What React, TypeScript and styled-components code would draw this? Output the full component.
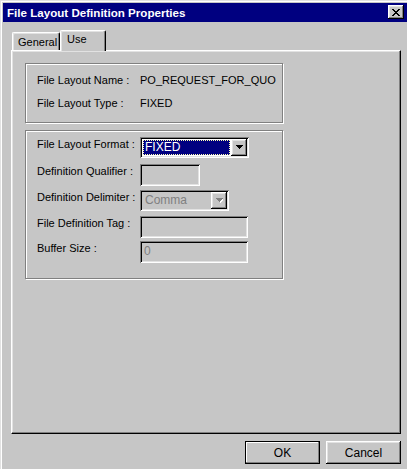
import React from "react";
import styled, { createGlobalStyle, css } from "styled-components";

const GRAY = "#c6c6c6";
const LIGHT = "#e2e2e2";
const DARK = "#808080";
const NAVY = "#000080";

const GlobalStyle = createGlobalStyle`
  html, body {
    margin: 0;
    padding: 0;
    background: ${GRAY};
    overflow: hidden;
  }
  body {
    font-family: "Liberation Sans", Arial, sans-serif;
    font-size: 11px;
    color: #000;
  }
`;

const raised = css`
  box-shadow: inset -1px -1px 0 #000, inset 1px 1px 0 #fff,
    inset -2px -2px 0 ${DARK}, inset 2px 2px 0 ${LIGHT};
`;

const sunken = css`
  box-shadow: inset 1px 1px 0 ${DARK}, inset -1px -1px 0 #fff,
    inset 2px 2px 0 #000, inset -2px -2px 0 ${LIGHT};
`;

const Window = styled.div`
  box-sizing: border-box;
  width: 407px;
  height: 469px;
  background: ${GRAY};
  border-top: 1px solid ${LIGHT};
  border-left: 1px solid ${LIGHT};
  box-shadow: inset 1px 1px 0 #fff;
  padding: 2px 0 0 2px;
  display: flex;
  flex-direction: column;
  overflow: hidden;
`;

const TitleBar = styled.div`
  height: 19px;
  background: ${NAVY};
  display: flex;
  align-items: flex-start;
  justify-content: space-between;
  padding-left: 4px;
`;

const TitleText = styled.div`
  color: #fff;
  font-weight: bold;
  font-size: 11.6px;
  line-height: 19px;
`;

const CloseButton = styled.div`
  width: 16px;
  height: 14px;
  margin: 2px 3px 0 0;
  background: ${GRAY};
  ${raised};
  display: flex;
  align-items: center;
  justify-content: center;
`;

const Content = styled.div`
  padding: 8px 0 0 8px;
  display: flex;
  flex-direction: column;
`;

const TabStrip = styled.div`
  display: flex;
  align-items: flex-end;
  height: 20px;
  padding-left: 1px;
`;

const Tab = styled.div<{ $selected?: boolean; $width: number; $pad: number }>`
  box-sizing: border-box;
  width: ${(p) => p.$width}px;
  height: ${(p) => (p.$selected ? 21 : 18)}px;
  margin-bottom: ${(p) => (p.$selected ? -1 : 0)}px;
  position: relative;
  z-index: ${(p) => (p.$selected ? 1 : 0)};
  background: ${GRAY};
  border-top: 1px solid #fff;
  border-left: 1px solid #fff;
  border-right: 1px solid #000;
  border-radius: 2px 2px 0 0;
  box-shadow: inset -1px 0 0 ${DARK}, inset 1px 1px 0 ${LIGHT};
  padding-left: ${(p) => p.$pad}px;
  padding-top: ${(p) => (p.$selected ? 2 : 3)}px;
  line-height: 13px;
`;

const Panel = styled.div`
  box-sizing: border-box;
  width: 390px;
  height: 384px;
  border-top: 1px solid #fff;
  border-left: 1px solid #fff;
  border-right: 1px solid #000;
  border-bottom: 1px solid #000;
  box-shadow: inset -1px -1px 0 ${DARK}, inset 1px 1px 0 ${LIGHT};
  padding: 12px 0 0 13px;
  display: flex;
  flex-direction: column;
`;

const GroupBox = styled.div<{ $gap?: number }>`
  box-sizing: border-box;
  width: 258px;
  margin-top: ${(p) => p.$gap ?? 0}px;
  border: 1px solid ${DARK};
  box-shadow: inset 1px 1px 0 #fff, 1px 1px 0 #fff;
`;

const InfoGrid = styled.div`
  display: grid;
  grid-template-columns: 103px auto;
  grid-auto-rows: 23px;
  align-items: center;
  padding: 5px 0 7px 11px;
  line-height: 13px;
`;

const FormList = styled.div`
  display: flex;
  flex-direction: column;
  padding: 6px 0 14px 11px;
`;

const FieldRow = styled.div<{ $h: number }>`
  display: flex;
  align-items: flex-start;
  height: ${(p) => p.$h}px;
`;

const Label = styled.div`
  width: 103px;
  flex: none;
  line-height: 13px;
  padding-top: 1px;
`;

const Combo = styled.div<{ $width: number; $disabled?: boolean }>`
  box-sizing: border-box;
  width: ${(p) => p.$width}px;
  height: 21px;
  padding: 2px;
  background: ${(p) => (p.$disabled ? GRAY : "#fff")};
  ${sunken};
  display: flex;
`;

const ComboValue = styled.div<{ $selected?: boolean; $disabled?: boolean }>`
  box-sizing: border-box;
  flex: 1;
  margin: 1px;
  padding-left: 1px;
  line-height: 13px;
  font-size: 12px;
  color: ${(p) => (p.$disabled ? DARK : p.$selected ? "#fff" : "#000")};
  background: ${(p) => (p.$selected ? NAVY : "transparent")};
  border: 1px dotted ${(p) => (p.$selected ? "#ffffb0" : "transparent")};
`;

const DropButton = styled.div`
  width: 16px;
  height: 17px;
  flex: none;
  background: ${GRAY};
  ${raised};
  display: flex;
  align-items: center;
  justify-content: center;
`;

const TextBox = styled.div<{ $width: number }>`
  box-sizing: border-box;
  width: ${(p) => p.$width}px;
  height: 22px;
  padding: 4px 0 0 4px;
  background: ${GRAY};
  ${sunken};
  color: ${DARK};
  font-size: 12px;
  line-height: 13px;
`;

const ButtonRow = styled.div`
  width: 390px;
  display: flex;
  justify-content: flex-end;
  gap: 6px;
  margin-top: 7px;
`;

const Button = styled.div<{ $default?: boolean }>`
  box-sizing: border-box;
  width: 75px;
  height: 23px;
  background: ${GRAY};
  display: flex;
  align-items: center;
  justify-content: center;
  font-size: 12px;
  ${(p) =>
    p.$default
      ? css`
          border: 1px solid #000;
          box-shadow: inset -1px -1px 0 ${DARK}, inset 1px 1px 0 #fff;
        `
      : raised};
`;

const Arrow = ({ disabled }: { disabled?: boolean }) => (
  <svg width="7" height="5" viewBox="0 0 7 5" shapeRendering="crispEdges">
    {disabled && <path d="M1 1h7v1h-1v1h-1v1h-1v1h-1z" fill="#fff" />}
    <path d="M0 0h7v1h-1v1h-1v1h-1v1h-1v-1h-1v-1h-1v-1h-1z" fill={disabled ? DARK : "#000"} />
  </svg>
);

const CloseGlyph = () => (
  <svg width="8" height="7" viewBox="0 0 8 7" shapeRendering="crispEdges">
    <path d="M0 0h2v1h1v1h2v-1h1v-1h2v1h-1v1h-1v1h-1v1h1v1h1v1h1v1h-2v-1h-1v-1h-2v1h-1v1h-2v-1h1v-1h1v-1h1v-1h-1v-1h-1v-1h-1z" fill="#000" />
  </svg>
);

export default function App() {
  return (
    <>
      <GlobalStyle />
      <Window>
        <TitleBar>
          <TitleText>File Layout Definition Properties</TitleText>
          <CloseButton>
            <CloseGlyph />
          </CloseButton>
        </TitleBar>
        <Content>
          <TabStrip>
            <Tab $width={48} $pad={5}>General</Tab>
            <Tab $selected $width={46} $pad={6}>Use</Tab>
          </TabStrip>
          <Panel>
            <GroupBox>
              <InfoGrid>
                <div>File Layout Name :</div>
                <div>PO_REQUEST_FOR_QUO</div>
                <div>File Layout Type :</div>
                <div>FIXED</div>
              </InfoGrid>
            </GroupBox>
            <GroupBox $gap={7}>
              <FormList>
                <FieldRow $h={27}>
                  <Label>File Layout Format :</Label>
                  <Combo $width={109}>
                    <ComboValue $selected>FIXED</ComboValue>
                    <DropButton>
                      <Arrow />
                    </DropButton>
                  </Combo>
                </FieldRow>
                <FieldRow $h={26}>
                  <Label>Definition Qualifier :</Label>
                  <TextBox $width={60} />
                </FieldRow>
                <FieldRow $h={26}>
                  <Label>Definition Delimiter :</Label>
                  <Combo $width={89} $disabled>
                    <ComboValue $disabled>Comma</ComboValue>
                    <DropButton>
                      <Arrow disabled />
                    </DropButton>
                  </Combo>
                </FieldRow>
                <FieldRow $h={25}>
                  <Label>File Definition Tag :</Label>
                  <TextBox $width={108} />
                </FieldRow>
                <FieldRow $h={23}>
                  <Label>Buffer Size :</Label>
                  <TextBox $width={108}>0</TextBox>
                </FieldRow>
              </FormList>
            </GroupBox>
          </Panel>
          <ButtonRow>
            <Button $default>OK</Button>
            <Button>Cancel</Button>
          </ButtonRow>
        </Content>
      </Window>
    </>
  );
}
